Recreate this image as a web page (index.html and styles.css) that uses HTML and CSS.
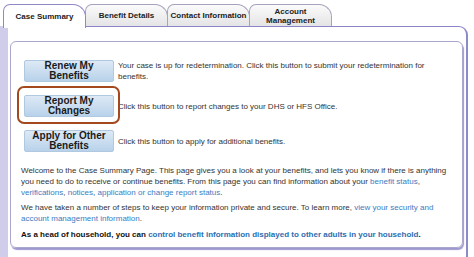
FILE: index.html
```html
<!DOCTYPE html>
<html>
<head>
<meta charset="utf-8">
<link rel="stylesheet" href="styles.css">
</head>
<body>
<div class="tabs">
  <div class="tab active">Case Summary</div>
  <div class="tab">Benefit Details</div>
  <div class="tab">Contact Information</div>
  <div class="tab">Account<br>Management</div>
</div>
<div class="frame">
  <div class="panel">
    <div class="row">
      <div class="btn">Renew My<br>Benefits</div>
      <div class="desc">Your case is up for redetermination. Click this button to submit your redetermination for benefits.</div>
    </div>
    <div class="row">
      <div class="btn-wrap"><div class="btn">Report My<br>Changes</div><span class="highlight"></span></div>
      <div class="desc">Click this button to report changes to your DHS or HFS Office.</div>
    </div>
    <div class="row">
      <div class="btn">Apply for Other<br>Benefits</div>
      <div class="desc">Click this button to apply for additional benefits.</div>
    </div>
    <p class="para first">Welcome to the Case Summary Page. This page gives you a look at your benefits, and lets you know if there is anything you need to do to receive or continue benefits. From this page you can find information about your <a>benefit status</a>, <a>verifications</a>, <a>notices</a>, <a>application or change report status</a>.</p>
    <p class="para">We have taken a number of steps to keep your information private and secure. To learn more, <a>view your security and account management information</a>.</p>
    <p class="para strong">As a head of household, you can <a>control benefit information displayed to other adults in your household</a>.</p>
  </div>
</div>
</body>
</html>
```
FILE: styles.css
```css
html, body {
  margin: 0;
  padding: 0;
  background: #fff;
}
body {
  width: 474px;
  height: 257px;
  overflow: hidden;
  font-family: "Liberation Sans", Arial, sans-serif;
  color: #333;
}
.tabs {
  display: flex;
  height: 22px;
  padding: 4px 0 0 3px;
}
.tab {
  box-sizing: border-box;
  width: 83px;
  height: 22px;
  margin-right: -1px;
  border: 1px solid #a6a4bc;
  border-bottom: none;
  border-radius: 7px 13px 0 0;
  background: linear-gradient(#fbfbfb, #e4e4e6);
  display: flex;
  align-items: center;
  justify-content: center;
  text-align: center;
  font-size: 8px;
  line-height: 9px;
  font-weight: bold;
  color: #222;
}
.tab.active {
  position: relative;
  z-index: 1;
  height: 24px;
  background: #fff;
  border-color: #8f8ac4;
}
.frame {
  box-sizing: border-box;
  width: 468px;
  height: 240px;
  border-top: 1px solid #8a84c8;
  border-right: 2px solid #8f89cc;
  border-left: 8px solid #cfcdea;
  border-top-right-radius: 9px;
  padding: 14px 3px 0 2px;
}
.panel {
  border: 1px solid #aaa7cc;
  border-radius: 6px;
  box-shadow: 1px 2px 1px #9d98d0;
  padding: 18px 10px 7px 10px;
  font-size: 8px;
  line-height: 11px;
}
.row {
  display: flex;
  align-items: center;
  gap: 4px;
  padding-left: 3px;
  margin-bottom: 13px;
}
.btn {
  box-sizing: border-box;
  flex: none;
  width: 90px;
  height: 22px;
  border-radius: 2px;
  background: linear-gradient(#dde9f5, #b8d2ea);
  border: 1px solid #b0c9e0;
  display: flex;
  align-items: center;
  justify-content: center;
  text-align: center;
  font-size: 10px;
  line-height: 10px;
  font-weight: bold;
  color: #1b1b1b;
}
.btn-wrap {
  position: relative;
  flex: none;
}
.highlight {
  position: absolute;
  left: -7px;
  top: -9px;
  right: -6px;
  bottom: -7px;
  border: 2.5px solid #a4491d;
  border-radius: 7px;
}
.desc {
  color: #333;
}
.para {
  margin: 4px 0 0 0;
}
.para.first {
  margin-top: 7px;
}
.para a {
  color: #3b7cc3;
}
.para.strong {
  margin-top: 5px;
  font-weight: bold;
  color: #111;
}
.para.strong a {
  color: #2d6db0;
}
```
